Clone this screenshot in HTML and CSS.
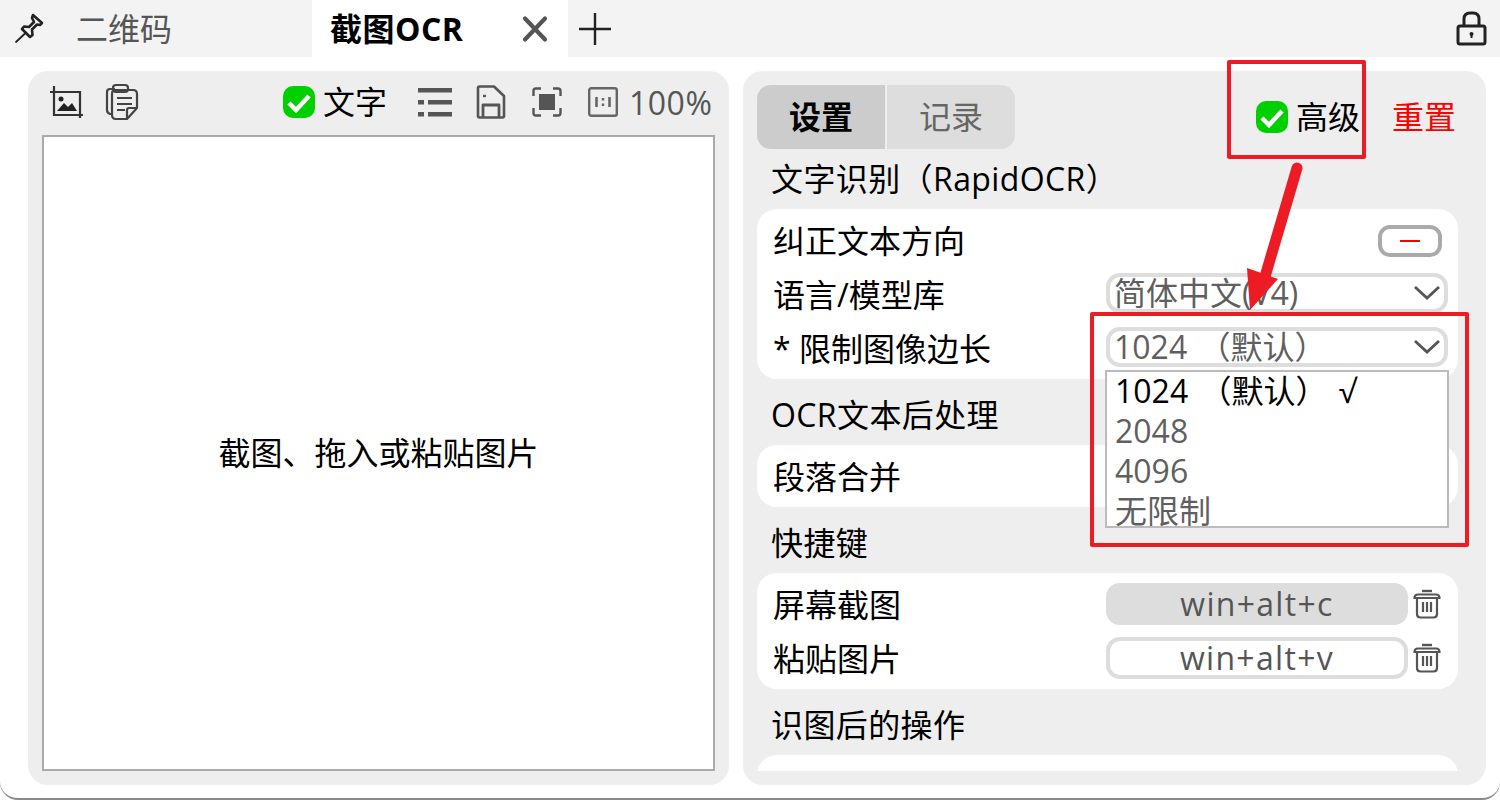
FILE: index.html
```html
<!DOCTYPE html>
<html lang="zh-CN">
<head>
<meta charset="utf-8">
<title>截图OCR</title>
<link rel="stylesheet" href="styles.css">
</head>
<body>
<div class="app">
  <header class="tabbar">
    <div class="pin">
      <svg width="32" height="32" viewBox="0 0 32 32" fill="none" stroke="#222" stroke-width="2.600" stroke-linejoin="round" stroke-linecap="round"><path d="M19 2 L28 10 L26 12 L23 11.500 L18 16.500 L18.500 22 L16 24 L8 16 L10 13.500 L15 14 L20 9 L18 5 Z"/><path d="M11 20.500 L2 29" stroke-width="1.800"/></svg>
    </div>
    <div class="tab">二维码</div>
    <div class="tab tab-active">
      <span class="tab-title">截图OCR</span>
      <svg class="tab-close" width="28" height="28" viewBox="0 0 28 28" stroke="#555" stroke-width="4.200" stroke-linecap="round"><path d="M4 3.500 L24 24.500 M24 3.500 L4 24.500"/></svg>
    </div>
    <svg class="tab-add" width="34" height="34" viewBox="0 0 34 34" stroke="#222" stroke-width="2.400"><path d="M1 17 H33 M17 1 V33"/></svg>
    <svg class="lock" width="32" height="36" viewBox="0 0 32 36" fill="none" stroke="#222" stroke-width="3"><rect x="2" y="15" width="27" height="18" rx="2"/><path d="M8 15 V8 Q8 2 14 2 H17 Q23 2 23 8 V15"/><circle cx="15.500" cy="23" r="2" fill="#222" stroke="none"/><path d="M15.500 24 V27" stroke-width="2"/></svg>
  </header>

  <main class="content">
    <section class="panel panel-left">
      <div class="toolbar">
        <svg class="ic" width="36" height="36" viewBox="0 0 36 36" fill="none" stroke="#333" stroke-width="2.200"><path d="M6 2 V31 H35 M32 34 V8 H2"/><circle cx="13" cy="15" r="2.500" fill="#222" stroke="none"/><path d="M9 27 L16 19 L20 23 L24 19 L29 27 Z" fill="#222" stroke="none"/></svg>
        <svg class="ic ic-clip" width="36" height="38" viewBox="0 0 36 38" fill="none" stroke="#444" stroke-width="2.200" stroke-linejoin="round"><path d="M11 6 H6 Q3 6 3 9 V27 Q3 30 6 31 H8"/><rect x="9" y="2" width="15" height="7" rx="3"/><path d="M11 7 H29 Q33 7 33 11 V25 L23 36 H12 Q8 36 8 32 V11 Q8 7 11 7 Z"/><path d="M13 15 H28 M13 21 H28 M13 27 H21"/><path d="M33 25 H25 Q23 25 23 27 V36"/></svg>
        <label class="check check-text">
          <svg width="32" height="32" viewBox="0 0 32 32"><rect width="32" height="32" rx="10" fill="#00d000"/><path d="M6 17 L13 24 L26 10" fill="none" stroke="#fff" stroke-width="4.500"/></svg>
          <span>文字</span>
        </label>
        <svg class="ic ic-list" width="36" height="32" viewBox="0 0 36 32" fill="#555"><rect x="1" y="2" width="34" height="4.500"/><rect x="1" y="14" width="6" height="4.500"/><rect x="11" y="14" width="24" height="4.500"/><rect x="1" y="26" width="6" height="4.500"/><rect x="11" y="26" width="24" height="4.500"/></svg>
        <svg class="ic ic-save" width="30" height="34" viewBox="0 0 30 34" fill="none" stroke="#555" stroke-width="2.600" stroke-linejoin="round"><path d="M2 3 Q2 1.500 3.500 1.500 H18 L28 11 V31 Q28 32.500 26.500 32.500 H3.500 Q2 32.500 2 31 Z"/><path d="M7 32 V20 H23 V32" stroke-width="2.800"/><path d="M7 11 H10" stroke-width="2.400"/></svg>
        <svg class="ic ic-fit" width="30" height="30" viewBox="0 0 30 30" fill="none" stroke="#555" stroke-width="2.400"><path d="M1.500 9 V4 Q1.500 1.500 4 1.500 H9 M21 1.500 H26 Q28.500 1.500 28.500 4 V9 M28.500 21 V26 Q28.500 28.500 26 28.500 H21 M9 28.500 H4 Q1.500 28.500 1.500 26 V21"/><rect x="7" y="7" width="16" height="16" fill="#555" stroke="none"/></svg>
        <svg class="ic ic-ratio" width="30" height="30" viewBox="0 0 30 30" fill="none" stroke="#666" stroke-width="2.400"><rect x="1.200" y="1.200" width="27.600" height="27.600" rx="2"/><path d="M8.500 10 V20 M21.500 10 V20" stroke-width="2.600"/><path d="M15 11 V13.500 M15 16.500 V19" stroke-width="2.400"/></svg>
        <span class="zoom-label">100%</span>
      </div>
      <div class="canvas">截图、拖入或粘贴图片</div>
    </section>

    <section class="panel panel-right">
      <div class="top-row">
        <div class="segment">
          <div class="seg seg-on">设置</div>
          <div class="seg">记录</div>
        </div>
        <label class="check check-adv">
          <svg width="32" height="32" viewBox="0 0 32 32"><rect width="32" height="32" rx="10" fill="#00d000"/><path d="M6 17 L13 24 L26 10" fill="none" stroke="#fff" stroke-width="4.500"/></svg>
          <span>高级</span>
        </label>
        <div class="reset">重置</div>
      </div>
      <div class="scroll">
        <h2 class="title title-first">文字识别（RapidOCR）</h2>
        <div class="card">
          <div class="row">
            <span>纠正文本方向</span>
            <span class="switch"><i class="switch-dash"></i></span>
          </div>
          <div class="row">
            <span>语言/模型库</span>
            <div class="select">
              <span>简体中文(V4)</span>
              <svg class="chev" width="28" height="16" viewBox="0 0 28 16" fill="none" stroke="#555" stroke-width="2.800"><path d="M2 2 L14 13 L26 2"/></svg>
            </div>
          </div>
          <div class="row">
            <span>* 限制图像边长</span>
            <div class="select select-open">
              <span class="select-value">1024 （默认）</span>
              <svg class="chev" width="28" height="16" viewBox="0 0 28 16" fill="none" stroke="#555" stroke-width="2.800"><path d="M2 2 L14 13 L26 2"/></svg>
              <ul class="menu">
                <li class="menu-on">1024 （默认） √</li>
                <li>2048</li>
                <li>4096</li>
                <li>无限制</li>
              </ul>
            </div>
          </div>
        </div>
        <h2 class="title">OCR文本后处理</h2>
        <div class="card">
          <div class="row"><span>段落合并</span></div>
        </div>
        <h2 class="title">快捷键</h2>
        <div class="card">
          <div class="row">
            <span>屏幕截图</span>
            <div class="hotkey-wrap">
              <div class="hotkey hotkey-on">win+alt+c</div>
              <svg class="trash" width="28" height="30" viewBox="0 0 28 30" fill="none" stroke="#555" stroke-width="2.200"><path d="M9 2 H19" stroke-width="2.400"/><path d="M1.500 9 Q1.500 5.500 5 5.500 H23 Q26.500 5.500 26.500 9 Z"/><path d="M4 9 V25 Q4 28.500 7.500 28.500 H20.500 Q24 28.500 24 25 V9"/><path d="M10 13 V23 M14 13 V23 M18 13 V23"/></svg>
            </div>
          </div>
          <div class="row">
            <span>粘贴图片</span>
            <div class="hotkey-wrap">
              <div class="hotkey">win+alt+v</div>
              <svg class="trash" width="28" height="30" viewBox="0 0 28 30" fill="none" stroke="#555" stroke-width="2.200"><path d="M9 2 H19" stroke-width="2.400"/><path d="M1.500 9 Q1.500 5.500 5 5.500 H23 Q26.500 5.500 26.500 9 Z"/><path d="M4 9 V25 Q4 28.500 7.500 28.500 H20.500 Q24 28.500 24 25 V9"/><path d="M10 13 V23 M14 13 V23 M18 13 V23"/></svg>
            </div>
          </div>
        </div>
        <h2 class="title">识图后的操作</h2>
        <div class="card card-clipped"></div>
      </div>
    </section>
  </main>
</div>

<div class="mark mark-top"></div>
<div class="mark mark-bottom"></div>
<svg class="arrow" width="70" height="160" viewBox="0 0 70 160">
  <path d="M57 8 L24 120" stroke="#ed1c24" stroke-width="11" stroke-linecap="round" fill="none"/>
  <path d="M7 108 L38 119 L10 150 Z" fill="#ed1c24"/>
</svg>
</body>
</html>
```

FILE: styles.css
```css
* { box-sizing: border-box; }
html, body { margin: 0; padding: 0; }
body {
  width: 1500px;
  height: 800px;
  overflow: hidden;
  position: relative;
  background: #fff;
  color: #000;
  font-family: "Open Sans", "Noto Sans CJK SC", sans-serif;
  font-size: 32px;
}
.app {
  height: 800px;
  display: flex;
  flex-direction: column;
  background: #fff;
  border-bottom: 2px solid #8a8a8a;
  border-radius: 0 0 18px 18px;
}

/* tab bar */
.tabbar {
  height: 57px;
  flex: none;
  display: flex;
  align-items: center;
  background: #f3f3f3;
}
.pin { width: 76px; padding-left: 14px; display: flex; }
.tab {
  height: 57px;
  width: 236px;
  display: flex;
  align-items: center;
  color: #555;
  line-height: 57px;
}
.tab-active {
  width: 256px;
  background: #fff;
  color: #000;
  font-weight: 700;
  padding: 0 19px 0 18px;
  justify-content: space-between;
  letter-spacing: 0.5px;
}
.tab-add { margin-left: 10px; }
.lock { margin-left: auto; margin-right: 12px; }

/* panels */
.content {
  flex: 1;
  display: flex;
  gap: 14px;
  padding: 14px 14px 13px 28px;
  min-height: 0;
}
.panel {
  background: #eee;
  border-radius: 20px;
  padding: 0 14px 14px;
  display: flex;
  flex-direction: column;
  min-height: 0;
}
.panel-left { width: 701px; }
.panel-right { width: 743px; padding-right: 28px; }

.toolbar {
  height: 64px;
  flex: none;
  display: flex;
  align-items: center;
  padding-left: 6px;
  padding-bottom: 2px;
  position: relative;
  white-space: nowrap;
}
.ic { flex: none; }
.ic-clip { margin-left: 20px; }
.check { display: flex; align-items: center; gap: 8px; line-height: 40px; flex: none; }
.check-text { margin-left: 143px; }
.ic-list { margin-left: 30px; }
.ic-save { margin-left: 23px; }
.ic-fit { margin-left: 26px; }
.ic-ratio { margin-left: 26px; }
.zoom-label { margin-left: 11px; color: #555; letter-spacing: 0.5px; }
.canvas {
  flex: 1;
  min-height: 0;
  background: #fff;
  border: 2px solid #aaa;
  display: flex;
  align-items: center;
  justify-content: center;
  padding-bottom: 4px;
}

/* right panel */
.top-row {
  flex: none;
  height: 78px;
  display: flex;
  align-items: flex-start;
  padding-top: 14px;
}
.segment { display: flex; gap: 2px; height: 64px; }
.seg {
  width: 128px;
  height: 64px;
  display: flex;
  align-items: center;
  justify-content: center;
  background: #ddd;
  color: #666;
  border-radius: 0 14px 14px 0;
  padding-bottom: 4px;
}
.seg-on {
  background: #ccc;
  color: #000;
  font-weight: 700;
  border-radius: 14px 0 0 14px;
}
.check-adv { margin-left: 241px; margin-top: 12px; }
.reset { color: #f00; margin-left: 32px; margin-top: 10px; line-height: 44px; }

.scroll {
  flex: 1;
  min-height: 0;
  overflow: hidden;
}
.title {
  margin: 0;
  height: 66px;
  padding: 2px 14px 0;
  display: flex;
  align-items: center;
  font-size: 32px;
  font-weight: 400;
  white-space: nowrap;
  letter-spacing: 0.4px;
}
.title-first { height: 60px; padding: 0 14px 4px; }
.card {
  background: #fff;
  border-radius: 20px;
  padding: 6px 0 2px;
}
.card-clipped { height: 60px; }
.row {
  height: 54px;
  display: flex;
  align-items: center;
  justify-content: space-between;
  padding: 0 10px 6px 16px;
}
.switch {
  width: 64px;
  height: 32px;
  border: 4px solid #aaa;
  border-radius: 12px;
  display: flex;
  align-items: center;
  justify-content: center;
  background: #fff;
  margin: 4px 6px 0 0;
}
.switch-dash { display: block; width: 20px; height: 2px; background: #f00; }
.select {
  width: 342px;
  height: 40px;
  border: 4px solid #ddd;
  border-radius: 14px;
  display: flex;
  align-items: center;
  justify-content: space-between;
  padding: 0 3px 0 4px;
  color: #5f5f5f;
  position: relative;
  line-height: 34px;
  white-space: nowrap;
}
.select-value { word-spacing: 3px; }
.menu {
  position: absolute;
  top: 39px;
  left: -5px;
  width: 344px;
  height: 158px;
  margin: 0;
  padding: 0 0 0 8px;
  list-style: none;
  background: #fff;
  border: 2px solid #bbb;
  overflow: hidden;
  z-index: 2;
}
.menu li { height: 40px; line-height: 38px; word-spacing: 3px; }
.menu .menu-on { color: #000; }

.hotkey-wrap { display: flex; align-items: center; gap: 5px; margin-top: 2px; }
.hotkey {
  width: 302px;
  height: 42px;
  border: 4px solid #ddd;
  border-radius: 14px;
  background: #fff;
  color: #555;
  display: flex;
  align-items: center;
  justify-content: center;
  line-height: 34px;
  letter-spacing: 1.3px;
}
.hotkey-on { background: #ddd; }
.trash { flex: none; margin-right: 7px; }

/* annotations drawn over the screenshot */
.mark {
  position: absolute;
  border: 4px solid #ed1c24;
  border-radius: 2px;
  z-index: 5;
}
.mark-top { left: 1227px; top: 60px; width: 139px; height: 99px; }
.mark-bottom { left: 1090px; top: 312px; width: 379px; height: 235px; }
.arrow { position: absolute; left: 1240px; top: 160px; z-index: 6; }
```
